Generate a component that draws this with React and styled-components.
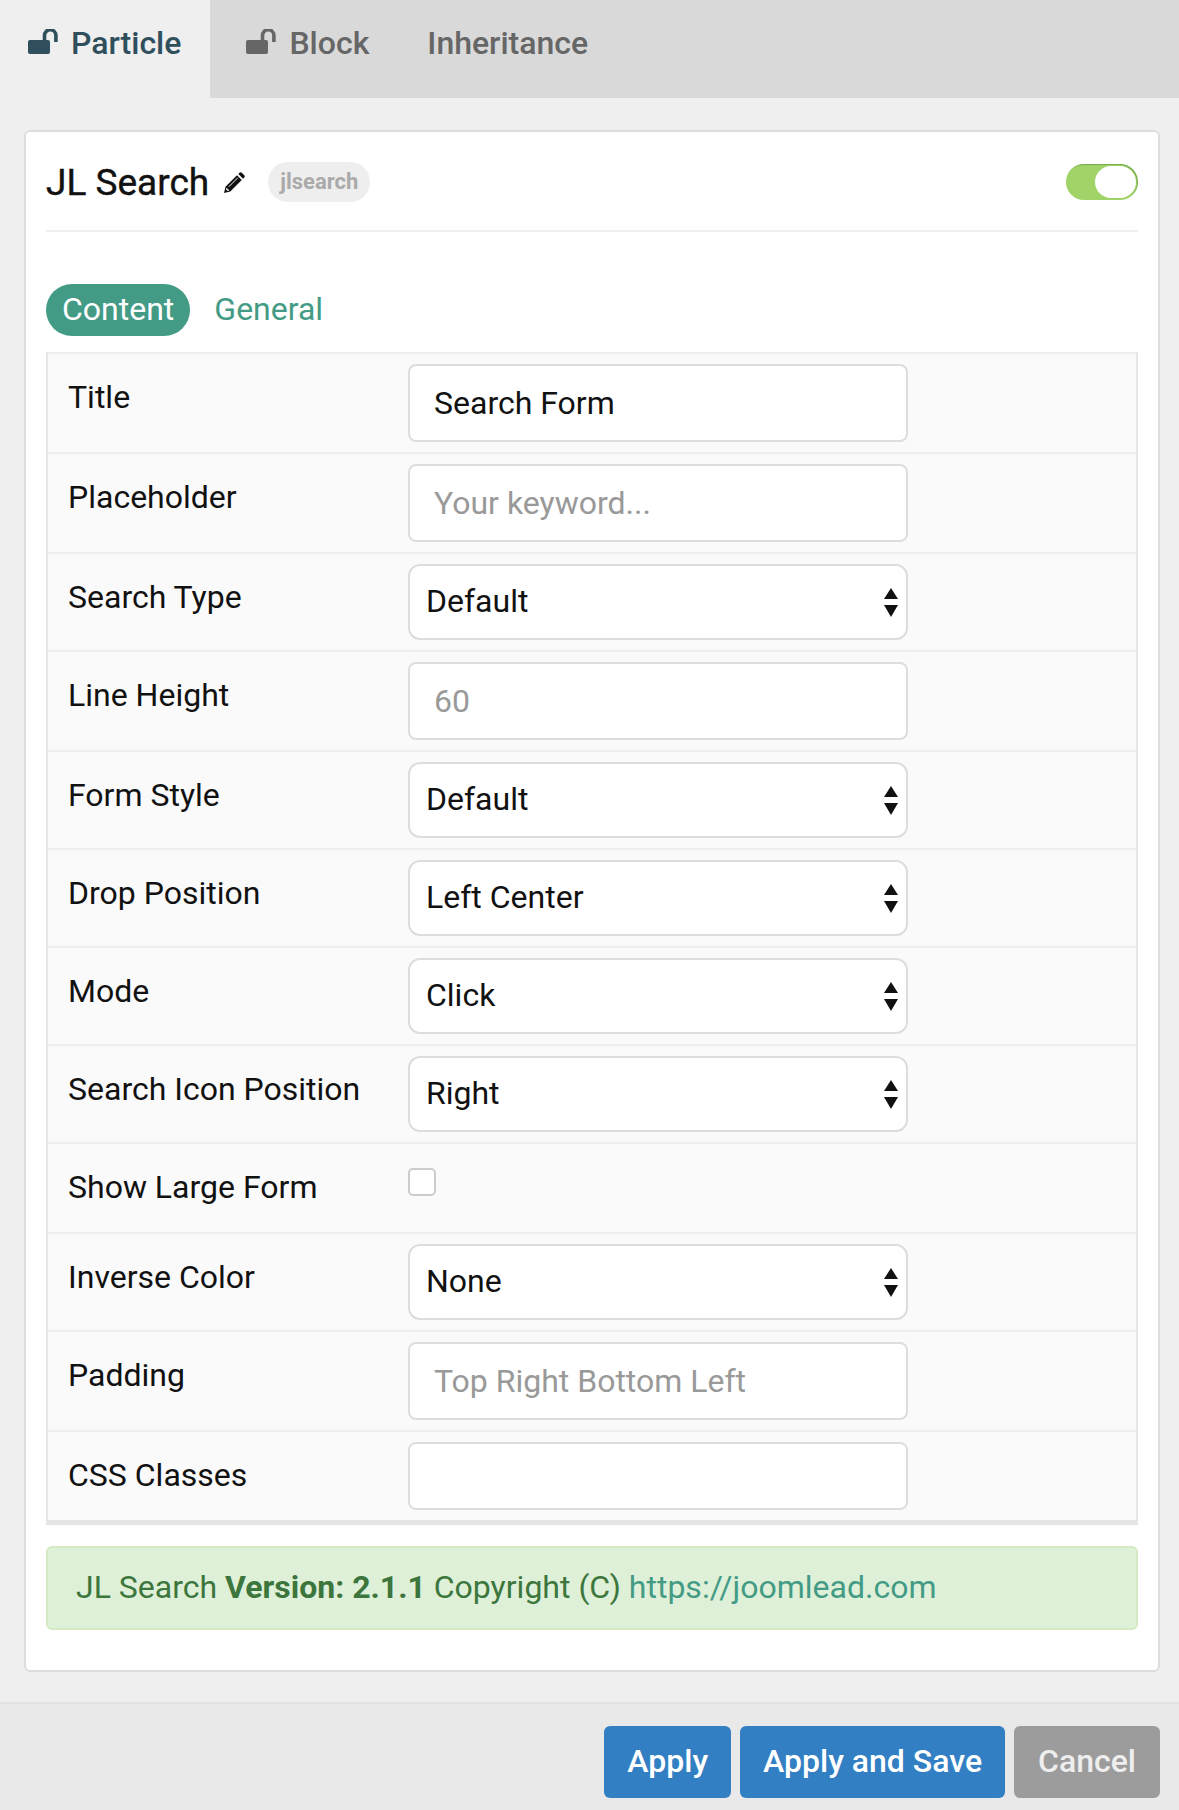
import React from "react";
import styled, { createGlobalStyle } from "styled-components";

const rows = [
  { label: "Title", type: "text", value: "Search Form" },
  { label: "Placeholder", type: "text", placeholder: "Your keyword..." },
  { label: "Search Type", type: "select", value: "Default" },
  { label: "Line Height", type: "text", placeholder: "60" },
  { label: "Form Style", type: "select", value: "Default" },
  { label: "Drop Position", type: "select", value: "Left Center" },
  { label: "Mode", type: "select", value: "Click" },
  { label: "Search Icon Position", type: "select", value: "Right" },
  { label: "Show Large Form", type: "checkbox" },
  { label: "Inverse Color", type: "select", value: "None" },
  { label: "Padding", type: "text", placeholder: "Top Right Bottom Left" },
  { label: "CSS Classes", type: "text", short: true },
];

const UnlockIcon = () => (
  <TabIcon viewBox="0 0 30 25">
    <rect x="0" y="11" width="22" height="14" rx="2" fill="currentColor" />
    <path d="M16.5 12V6.5a5.7 5.7 0 0 1 11.4 0V13" fill="none" stroke="currentColor" strokeWidth="3.6" />
  </TabIcon>
);

const PencilIcon = () => (
  <Pencil viewBox="0 0 22 22">
    <path d="M0 22l1.6-6.6L13.6 3.4l5 5L6.6 20.4z" />
    <path d="M15 2l1.2-1.2a1.8 1.8 0 0 1 2.5 0l2.5 2.5a1.8 1.8 0 0 1 0 2.5L20 7z" />
    <path d="M5 15.5l9.5-9.5" stroke="#fff" strokeWidth="1" fill="none" />
    <path d="M2.6 16.5l3 3-1.6 .5-2-2z" fill="#fff" />
  </Pencil>
);

const SelectArrows = () => (
  <Arrows viewBox="0 0 14 29">
    <path d="M7 0l7 11H0z" />
    <path d="M0 17h14L7 29z" />
  </Arrows>
);

const Field = ({ row }) => {
  if (row.type === "select") {
    return (
      <SelectWrap>
        <Select defaultValue={row.value}>
          <option>{row.value}</option>
        </Select>
        <SelectArrows />
      </SelectWrap>
    );
  }
  if (row.type === "checkbox") {
    return <Checkbox type="checkbox" />;
  }
  return (
    <TextInput
      type="text"
      $short={row.short}
      defaultValue={row.value}
      placeholder={row.placeholder}
    />
  );
};

const App = () => {
  return (
    <Page>
      <GlobalStyle />
      <TabBar>
        <Tab $active>
          <UnlockIcon />
          Particle
        </Tab>
        <Tab>
          <UnlockIcon />
          Block
        </Tab>
        <Tab>Inheritance</Tab>
      </TabBar>

      <Main>
        <Card>
          <CardHeader>
            <CardTitle>JL Search</CardTitle>
            <PencilIcon />
            <Badge>jlsearch</Badge>
            <Toggle>
              <Knob />
            </Toggle>
          </CardHeader>

          <Pills>
            <Pill $active>Content</Pill>
            <Pill>General</Pill>
          </Pills>

          <Table>
            {rows.map((row) => (
              <Row key={row.label} $type={row.type}>
                <Label>{row.label}</Label>
                <Field row={row} />
              </Row>
            ))}
          </Table>

          <Alert>
            JL Search <strong>Version: 2.1.1</strong> Copyright (C){" "}
            <AlertLink href="#">https://joomlead.com</AlertLink>
          </Alert>
        </Card>
      </Main>

      <Footer>
        <Button $primary>Apply</Button>
        <Button $primary>Apply and Save</Button>
        <Button>Cancel</Button>
      </Footer>
    </Page>
  );
};

export default App;

const GlobalStyle = createGlobalStyle`
  html, body {
    margin: 0;
    padding: 0;
    background: #efefef;
  }
  * {
    box-sizing: border-box;
  }
  body, input, select, button {
    font-family: Roboto, "Liberation Sans", sans-serif;
  }
`;

const Page = styled.div`
  display: flex;
  flex-direction: column;
  width: 1179px;
  height: 1810px;
  overflow: hidden;
  background: #efefef;
`;

const TabBar = styled.div`
  display: flex;
  gap: 8px;
  height: 98px;
  background: #d9d9d9;
`;

const Tab = styled.div`
  display: flex;
  align-items: center;
  gap: 13px;
  height: 100%;
  padding: 0 ${(p) => (p.$active ? "29px" : "22px")} 12px 28px;
  font-size: 32px;
  font-weight: 500;
  color: ${(p) => (p.$active ? "#2f4f5d" : "#666")};
  background: ${(p) => (p.$active ? "#efefef" : "transparent")};
`;

const TabIcon = styled.svg`
  width: 30px;
  height: 25px;
  margin-top: -3px;
`;

const Main = styled.div`
  padding: 32px 19px 30px 24px;
`;

const Card = styled.div`
  height: 1542px;
  padding: 0 20px;
  background: #fff;
  border: 2px solid #ddd;
  border-radius: 6px;
`;

const CardHeader = styled.div`
  display: flex;
  align-items: center;
  height: 100px;
  border-bottom: 2px solid #eee;
`;

const CardTitle = styled.h4`
  margin: 3px 0 0;
  font-size: 37px;
  font-weight: 400;
  -webkit-text-stroke: 0.4px #111;
  color: #111;
`;

const Pencil = styled.svg`
  width: 21px;
  height: 21px;
  margin: 2px 0 0 15px;
  fill: #111;
`;

const Badge = styled.span`
  display: flex;
  align-items: center;
  height: 40px;
  margin: 2px 0 0 23px;
  padding: 0 12px 2px;
  font-size: 22px;
  font-weight: 700;
  color: #aaa;
  background: #eee;
  border-radius: 20px;
`;

const Toggle = styled.div`
  display: flex;
  justify-content: flex-end;
  align-items: center;
  width: 72px;
  height: 36px;
  margin: 2px 0 0 auto;
  padding-right: 2px;
  background: #a0d468;
  border-radius: 18px;
  box-shadow: inset -1px 1px 1px rgba(60, 110, 40, 0.4);
`;

const Knob = styled.div`
  width: 41px;
  height: 32px;
  background: #fff;
  border-radius: 16px;
`;

const Pills = styled.div`
  display: flex;
  align-items: center;
  gap: 8px;
  margin-top: 52px;
  margin-bottom: 16px;
`;

const Pill = styled.a`
  display: flex;
  align-items: center;
  height: 52px;
  padding: 0 16px 2px;
  font-size: 32px;
  color: ${(p) => (p.$active ? "#fff" : "#439b85")};
  background: ${(p) => (p.$active ? "#439b85" : "transparent")};
  border-radius: 26px;
`;

const Table = styled.div`
  border: 2px solid #e6e6e6;
  border-top: 0;
  border-bottom: 5px solid #e4e4e4;
`;

const Row = styled.div`
  display: grid;
  grid-template-columns: 360px 500px;
  align-items: start;
  padding: 10px 0 ${(p) => (p.$type === "checkbox" ? "24px" : "10px")};
  background: #fafafa;
  border-top: 2px solid #eee;
`;

const Label = styled.label`
  display: block;
  margin-top: 12px;
  padding-left: 20px;
  font-size: 32px;
  line-height: 42px;
  color: #111;
`;

const TextInput = styled.input`
  display: block;
  width: 500px;
  height: ${(p) => (p.$short ? "68px" : "78px")};
  padding: 0 24px;
  font-size: 32px;
  color: #111;
  background: #fff;
  border: 2px solid #ddd;
  border-radius: 8px;
  outline: none;

  &::placeholder {
    color: #999;
  }
`;

const SelectWrap = styled.div`
  position: relative;
  width: 500px;
  height: 76px;
`;

const Select = styled.select`
  display: block;
  width: 100%;
  height: 100%;
  padding: 0 16px 2px;
  font-size: 32px;
  color: #111;
  background: #fff;
  border: 2px solid #ddd;
  border-radius: 12px;
  outline: none;
  appearance: none;
`;

const Arrows = styled.svg`
  position: absolute;
  top: 24px;
  right: 10px;
  width: 14px;
  height: 29px;
  fill: #111;
`;

const Checkbox = styled.input`
  display: block;
  width: 28px;
  height: 28px;
  margin: 14px 0 0;
  background: #fff;
  border: 2px solid #ccc;
  border-radius: 5px;
  appearance: none;
`;

const Alert = styled.div`
  height: 84px;
  margin-top: 21px;
  padding: 0 28px;
  font-size: 32px;
  line-height: 78px;
  color: #3c763d;
  background: #dff0d8;
  border: 2px solid #d6e9c6;
  border-radius: 6px;
`;

const AlertLink = styled.a`
  color: #439b85;
  text-decoration: none;
`;

const Footer = styled.div`
  display: flex;
  justify-content: flex-end;
  gap: 9px;
  flex: 1;
  padding: 22px 19px 12px 0;
  background: #e9e9e9;
  border-top: 2px solid #e2e2e2;
`;

const Button = styled.button`
  height: 72px;
  padding: 0 ${(p) => (p.$primary ? "23px" : "24px")} 3px;
  font-size: 32px;
  font-weight: 500;
  color: ${(p) => (p.$primary ? "#fff" : "#eee")};
  background: ${(p) => (p.$primary ? "#337fc3" : "#9c9c9c")};
  border: 0;
  border-radius: 6px;
`;
